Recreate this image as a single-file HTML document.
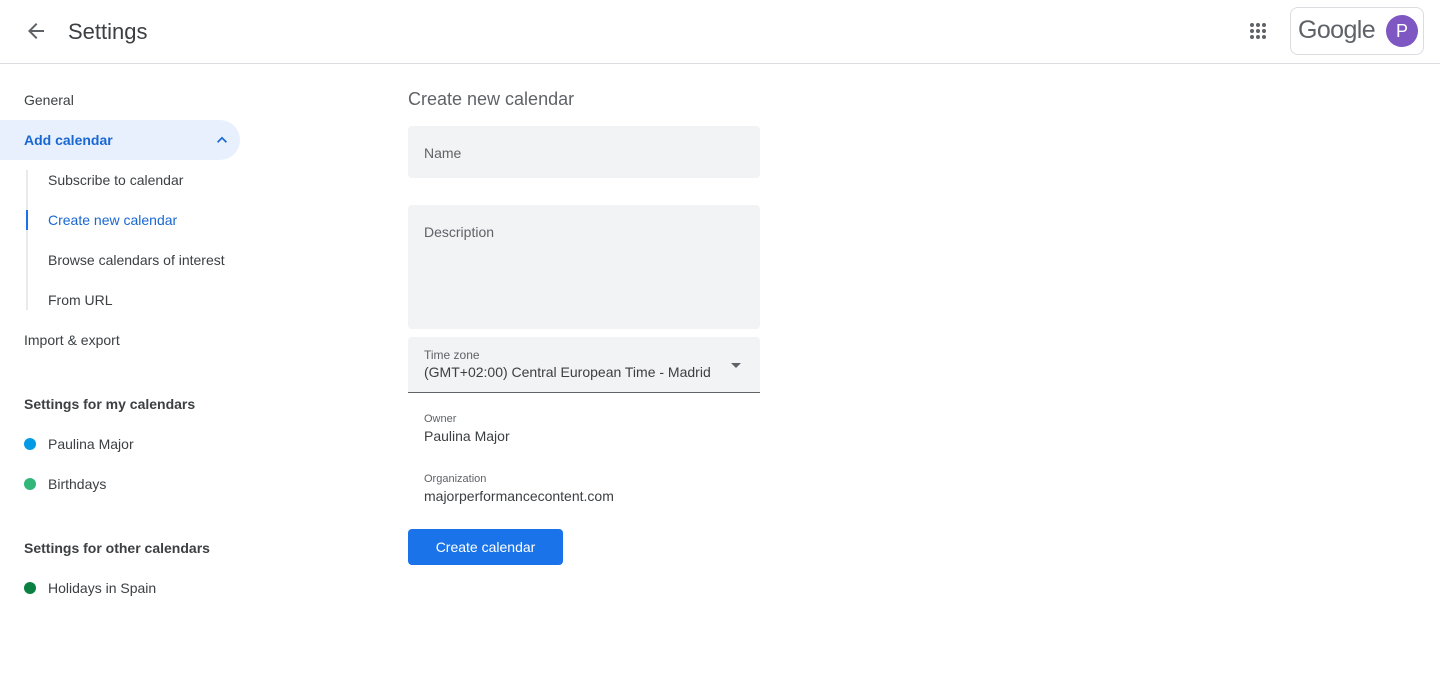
<!DOCTYPE html>
<html><head><style>
*{box-sizing:border-box;margin:0;padding:0}
body{width:1440px;height:685px;background:#fff;font-family:"Liberation Sans",Arial,sans-serif;color:#3c4043;position:relative;overflow:hidden}
.a{position:absolute;white-space:nowrap}
.hdr{position:absolute;left:0;top:0;width:1440px;height:64px;border-bottom:1px solid #dadce0}
.nav{font-size:14px;color:#3c4043}
.field{position:absolute;left:408px;width:352px;background:#f1f3f4;border-radius:4px 4px 0 0}
.lab{font-size:14px;color:#5f6368}
.dot{position:absolute;width:12px;height:12px;border-radius:50%}
</style></head><body>
<div class="hdr"></div>
<svg class="a" style="left:24px;top:19px" width="24" height="24" viewBox="0 0 24 24"><path d="M20 11H7.83l5.59-5.59L12 4l-8 8 8 8 1.41-1.41L7.83 13H20v-2z" fill="#5f6368"/></svg>
<div class="a" style="left:68px;top:19px;font-size:22px;color:#3c4043">Settings</div>
<svg class="a" style="left:1246px;top:19px" width="24" height="24" viewBox="0 0 24 24" fill="#5f6368"><circle cx="6" cy="6" r="2"/><circle cx="12" cy="6" r="2"/><circle cx="18" cy="6" r="2"/><circle cx="6" cy="12" r="2"/><circle cx="12" cy="12" r="2"/><circle cx="18" cy="12" r="2"/><circle cx="6" cy="18" r="2"/><circle cx="12" cy="18" r="2"/><circle cx="18" cy="18" r="2"/></svg>
<div class="a" style="left:1290px;top:7px;width:134px;height:48px;border:1px solid #dadce0;border-radius:8px"></div>
<div class="a" style="left:1298px;top:16px;font-size:25px;color:#5f6368;letter-spacing:-0.6px">Google</div>
<div class="a" style="left:1386px;top:15px;width:32px;height:32px;border-radius:50%;background:#7e57c2;color:#fff;font-size:18px;text-align:center;line-height:32px">P</div>

<div class="a nav" style="left:24px;top:92px">General</div>
<div class="a" style="left:0;top:120px;width:240px;height:40px;background:#e8f0fe;border-radius:0 20px 20px 0"></div>
<div class="a" style="left:24px;top:132px;font-size:14px;color:#1967d2;font-weight:bold">Add calendar</div>
<svg class="a" style="left:212px;top:130px" width="20" height="20" viewBox="0 0 24 24"><path d="M7.41 15.41L12 10.83l4.59 4.58L18 14l-6-6-6 6z" fill="#1967d2"/></svg>
<div class="a" style="left:26px;top:170px;width:2px;height:140px;background:#e8eaed"></div>
<div class="a" style="left:26px;top:210px;width:2px;height:20px;background:#1a73e8"></div>
<div class="a nav" style="left:48px;top:172px">Subscribe to calendar</div>
<div class="a" style="left:48px;top:212px;font-size:14px;color:#1967d2">Create new calendar</div>
<div class="a nav" style="left:48px;top:252px">Browse calendars of interest</div>
<div class="a nav" style="left:48px;top:292px">From URL</div>
<div class="a nav" style="left:24px;top:332px">Import &amp; export</div>
<div class="a" style="left:24px;top:396px;font-size:14px;font-weight:bold;color:#3c4043">Settings for my calendars</div>
<div class="dot" style="left:24px;top:438px;background:#039be5"></div>
<div class="a nav" style="left:48px;top:436px">Paulina Major</div>
<div class="dot" style="left:24px;top:478px;background:#33b679"></div>
<div class="a nav" style="left:48px;top:476px">Birthdays</div>
<div class="a" style="left:24px;top:540px;font-size:14px;font-weight:bold;color:#3c4043">Settings for other calendars</div>
<div class="dot" style="left:24px;top:582px;background:#0b8043"></div>
<div class="a nav" style="left:48px;top:580px">Holidays in Spain</div>

<div class="a" style="left:408px;top:89px;font-size:18px;color:#5f6368">Create new calendar</div>
<div class="field" style="top:126px;height:52px;border-radius:4px"></div>
<div class="a lab" style="left:424px;top:145px">Name</div>
<div class="field" style="top:205px;height:124px;border-radius:4px"></div>
<div class="a lab" style="left:424px;top:224px">Description</div>
<div class="field" style="top:337px;height:56px;border-bottom:1px solid #5f6368"></div>
<div class="a" style="left:424px;top:348px;font-size:12px;color:#5f6368">Time zone</div>
<div class="a" style="left:424px;top:364px;font-size:14px;color:#3c4043">(GMT+02:00) Central European Time - Madrid</div>
<div class="a" style="left:731px;top:363px;width:0;height:0;border-left:5px solid transparent;border-right:5px solid transparent;border-top:5px solid #5f6368"></div>
<div class="a" style="left:424px;top:413px;font-size:11px;color:#5f6368">Owner</div>
<div class="a" style="left:424px;top:428px;font-size:14px">Paulina Major</div>
<div class="a" style="left:424px;top:473px;font-size:11px;color:#5f6368">Organization</div>
<div class="a" style="left:424px;top:488px;font-size:14px">majorperformancecontent.com</div>
<div class="a" style="left:408px;top:529px;width:155px;height:36px;background:#1a73e8;border-radius:4px;color:#fff;font-size:14px;text-align:center;line-height:36px">Create calendar</div>
</body></html>
